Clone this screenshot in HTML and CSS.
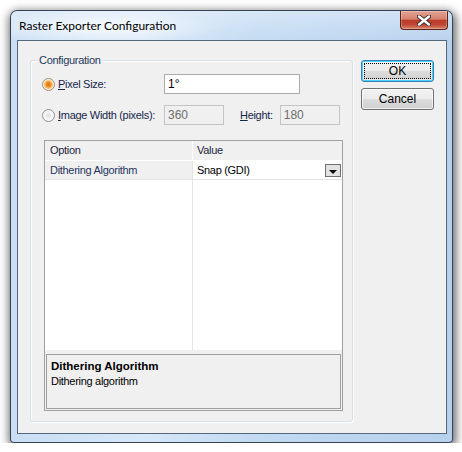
FILE: index.html
```html
<!DOCTYPE html>
<html>
<head>
<meta charset="utf-8">
<link rel="stylesheet" href="styles.css">
</head>
<body>
<div class="win">
  <div class="titlebar">
    <span class="title">Raster Exporter Configuration</span>
    <div class="close">
      <svg width="14" height="11" viewBox="0 0 14 11">
        <path d="M2 1.5 L12 9.5 M12 1.5 L2 9.5" stroke="#3a2a2a" stroke-width="4.2" stroke-linecap="round"/>
        <path d="M2 1.5 L12 9.5 M12 1.5 L2 9.5" stroke="#ffffff" stroke-width="2.4" stroke-linecap="round"/>
      </svg>
    </div>
  </div>
  <div class="client">
    <div class="group">
      <span class="legend">Configuration</span>
      <div class="row">
        <label class="radio"><span class="rb on"></span><span><u>P</u>ixel Size:</span></label>
        <div class="tb wide">1°</div>
      </div>
      <div class="row row2">
        <label class="radio"><span class="rb"></span><span><u>I</u>mage Width (pixels):</span></label>
        <div class="tb narrow dis">360</div>
        <span class="hlabel"><u>H</u>eight:</span>
        <div class="tb narrow dis">180</div>
      </div>
      <div class="grid">
        <div class="list">
          <div class="hdr"><div class="c1">Option</div><div class="c2">Value</div></div>
          <div class="prow"><div class="c1">Dithering Algorithm</div><div class="c2"><span>Snap (GDI)</span><span class="dd"><svg width="8" height="4" viewBox="0 0 8 4"><path d="M0 0 H8 L4 4 Z" fill="#000"/></svg></span></div></div>
          <div class="fill"><div class="c1"></div><div class="c2"></div></div>
        </div>
        <div class="desc">
          <div class="dtitle">Dithering Algorithm</div>
          <div class="dtext">Dithering algorithm</div>
        </div>
      </div>
    </div>
    <div class="buttons">
      <div class="btn ok"><span class="focus">OK</span></div>
      <div class="btn">Cancel</div>
    </div>
  </div>
</div>
</body>
</html>
```
FILE: styles.css
```css
html, body { margin: 0; padding: 0; background: #ffffff; }
body { padding: 10px 0 0 10px; font-family: "Liberation Sans", Arial, sans-serif; font-size: 11px; letter-spacing: -0.3px; }

.win {
  width: 443px; height: 433px; box-sizing: border-box;
  border: 1px solid rgba(30, 40, 55, 0.85);
  border-radius: 7px 7px 4px 4px;
  background: linear-gradient(to right, #c9def4 0%, #d6e7f8 30%, #c2daf2 55%, #b6d1ee 100%);
  box-shadow: 1px 3px 10px 2px rgba(0,0,0,0.6);
  display: flex; flex-direction: column;
  overflow: hidden;
}
.titlebar {
  height: 29px; display: flex; align-items: flex-start;
  background: radial-gradient(ellipse 120px 18px at 90px 16px, rgba(255,255,255,0.75), rgba(255,255,255,0) 100%),
              linear-gradient(to bottom, rgba(255,255,255,0.35), rgba(255,255,255,0.05));
}
.title {
  font-family: Lato, "Open Sans", sans-serif; font-size: 12px; line-height: 15px; letter-spacing: 0;
  padding: 7px 0 0 8px; color: #000;
}
.close {
  margin-left: auto; margin-right: 4px;
  width: 48px; height: 19px; box-sizing: border-box;
  border: 1px solid #5a2318; border-top: none;
  border-radius: 0 0 4px 4px;
  background: linear-gradient(to bottom, #e3a193 0%, #d6826f 45%, #bb3b28 52%, #c04632 75%, #d7836b 100%);
  display: flex; align-items: center; justify-content: center;
  box-shadow: inset 0 0 0 1px rgba(255,255,255,0.25);
}
.client {
  margin: 0 5px 0 6px; height: 394px; box-sizing: border-box;
  border: 1px solid #56687c;
  background: #f0f0f0;
  display: flex; align-items: flex-start;
  padding: 19px 0 0 12px;
}
.group {
  position: relative;
  width: 323px; height: 362px; box-sizing: border-box;
  border: 1px solid #d5dfe5; border-radius: 3px;
  box-shadow: 1px 1px 0 #ffffff, inset 1px 1px 0 #ffffff;
  padding: 13px 0 0 11px;
}
.legend {
  position: absolute; left: 6px; top: -8px;
  background: #f0f0f0; padding: 0 2px 0 2px;
  color: #1e395b; line-height: 14px;
}
.row { display: flex; align-items: center; height: 20px; }
.row2 { margin-top: 11px; }
.radio { width: 122px; display: flex; align-items: center; color: #15264a; }
.rb {
  width: 13px; height: 13px; box-sizing: border-box; border-radius: 50%;
  border: 1px solid #8f8f8f;
  background: radial-gradient(circle, #e2e2e2 0, #f0f0f0 3px, #fafafa 5px);
  margin-right: 3px; flex: none;
}
.rb.on {
  border-color: #9a8a78;
  background: radial-gradient(circle, #d9700f 0, #e98b22 2px, #f5b45c 3.5px, #fde3bd 4.8px, #ffffff 5.5px);
}
.tb {
  height: 20px; box-sizing: border-box; border: 1px solid #ababab;
  background: #fff; padding: 0 3px; line-height: 18px; color: #000;
  font-size: 12px; letter-spacing: 0;
}
.tb.wide { width: 136px; }
.tb.narrow { width: 60px; }
.tb.dis { background: #f0f0f0; color: #6d6d6d; border-color: #c4c4c4; }
.hlabel { margin: 0 7px 0 16px; color: #15264a; }
.grid {
  margin: 15px 0 0 2px;
  width: 299px; height: 271px; box-sizing: border-box;
  border: 1px solid #a0a0a0; background: #f0f0f0;
  display: flex; flex-direction: column;
}
.list { height: 209px; background: #fff; display: flex; flex-direction: column; }
.hdr, .prow, .fill { display: flex; }
.c1 { width: 148px; box-sizing: border-box; padding-left: 5px; border-right: 1px solid #e4e4e4; }
.c2 { flex: 1; padding-left: 4px; }
.hdr { height: 19px; line-height: 19px; background: #f0f0f0; color: #1c2540; border-bottom: 1px solid #fff; }
.hdr .c1 { border-right-color: #fff; }
.prow { height: 18px; line-height: 18px; border-bottom: 1px solid #e4e4e4; }
.prow .c1 { background: #f0f0f0; color: #1f3560; }
.prow .c2 { display: flex; align-items: center; justify-content: space-between; padding-right: 1px; color: #000; }
.dd {
  width: 16px; height: 13px; box-sizing: border-box; border: 1px solid #707070;
  background: #e2e2e2; display: flex; align-items: flex-end; justify-content: center; padding-bottom: 2px;
}
.fill { flex: 1; }
.desc {
  margin: 4px 1px 1px 1px; height: 55px; box-sizing: border-box;
  border: 1px solid #a0a0a0; background: #f0f0f0; padding: 3px 4px;
  color: #000;
}
.dtitle { font-weight: bold; font-size: 11.5px; line-height: 16px; letter-spacing: 0; }
.dtext { line-height: 14px; }
.buttons { margin-left: 8px; display: flex; flex-direction: column; gap: 6px; }
.btn {
  width: 73px; height: 22px; box-sizing: border-box;
  border: 1px solid #707070; border-radius: 3px;
  background: linear-gradient(to bottom, #f2f2f2 0%, #ebebeb 50%, #dddddd 50%, #cfcfcf 100%);
  box-shadow: inset 0 0 0 1px rgba(255,255,255,0.7);
  display: flex; align-items: center; justify-content: center;
  font-size: 12px; letter-spacing: 0; color: #000;
}
.btn.ok {
  border-color: #3c7fb1;
  box-shadow: inset 0 0 0 1px #48d1fc, inset 0 0 0 2px rgba(255,255,255,0.5);
}
.btn.ok .focus {
  width: 65px; height: 14px; border: 1px dotted #000; text-align: center; line-height: 14px;
}
```
